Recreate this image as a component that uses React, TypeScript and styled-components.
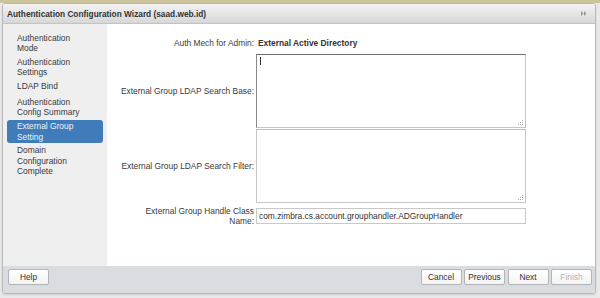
import styled, { createGlobalStyle } from "styled-components";

const GlobalStyle = createGlobalStyle`
  html, body {
    margin: 0;
    padding: 0;
  }
  body {
    width: 600px;
    height: 298px;
    overflow: hidden;
    background: linear-gradient(#cbc49c 0 3px, #e9e9e9 3px);
    font-family: "Liberation Sans", Arial, sans-serif;
    font-size: 8.4px;
    color: #333;
  }
`;

const Page = styled.div`
  padding: 3px 4px 4px 2px;
`;

const Dialog = styled.div`
  width: 592px;
  height: 289px;
  border: 1px solid #b9b9b9;
  border-radius: 3px;
  background: #fff;
  display: flex;
  flex-direction: column;
  overflow: hidden;
  box-shadow: 0 1px 2px rgba(0, 0, 0, 0.12);
`;

const TitleBar = styled.div`
  height: 19px;
  flex: none;
  display: flex;
  align-items: center;
  justify-content: space-between;
  padding: 0 8px 0 4px;
  background: linear-gradient(#f3f3f3, #d7d7d7);
  border-bottom: 1px solid #c3c3c3;
`;

const Title = styled.span`
  font-weight: bold;
  font-size: 8.3px;
  color: #333;
`;

const Body = styled.div`
  flex: 1;
  display: flex;
  min-height: 0;
`;

const Nav = styled.ul`
  width: 104px;
  flex: none;
  margin: 0;
  padding: 7.5px 0 0 4px;
  box-sizing: border-box;
  list-style: none;
  background: #efefef;
  display: flex;
  flex-direction: column;
  gap: 1px;
`;

const NavItem = styled.li<{ $active?: boolean }>`
  width: 96px;
  box-sizing: border-box;
  padding: 1px 4px 1px 10px;
  min-height: 15px;
  line-height: 10.6px;
  border-radius: 3px;
  color: ${(p) => (p.$active ? "#eef3f9" : "#3a3a3a")};
  background: ${(p) => (p.$active ? "#3f7cb9" : "transparent")};
`;

const Content = styled.div`
  flex: 1;
  padding: 13px 0 0 11px;
  display: flex;
  flex-direction: column;
`;

const Row = styled.div<{ $mt?: number }>`
  display: flex;
  align-items: center;
  gap: 2px;
  margin-top: ${(p) => p.$mt ?? 0}px;
`;

const Label = styled.div`
  width: 136px;
  flex: none;
  text-align: right;
  line-height: 10px;
  color: #3a3a3a;
`;

const Value = styled.div`
  padding-left: 2px;
  font-weight: bold;
  line-height: 12px;
  color: #333;
`;

const FieldWrap = styled.div`
  position: relative;
  width: 270px;
`;

const TextArea = styled.textarea<{ $focused?: boolean }>`
  display: block;
  width: 270px;
  height: 74px;
  box-sizing: border-box;
  margin: 0;
  padding: 2px;
  resize: none;
  outline: none;
  background: #fff;
  border: 1px solid #c6c6c6;
  border-top-color: ${(p) => (p.$focused ? "#6f6f6f" : "#bdbdbd")};
  border-left-color: ${(p) => (p.$focused ? "#8a8a8a" : "#c6c6c6")};
  font-family: "Liberation Sans", Arial, sans-serif;
  font-size: 8.4px;
`;

const Caret = styled.span`
  position: absolute;
  left: 4px;
  top: 3px;
  width: 1px;
  height: 8px;
  background: #333;
`;

const Grip = styled.svg`
  position: absolute;
  right: 3px;
  bottom: 3px;
`;

const TextInput = styled.input`
  display: block;
  width: 270px;
  height: 16px;
  box-sizing: border-box;
  margin: 0;
  padding: 0 2px;
  outline: none;
  border: 1px solid #c8c8c8;
  background: #fff;
  color: #333;
  font-family: "Liberation Sans", Arial, sans-serif;
  font-size: 8.4px;
`;

const Footer = styled.div`
  height: 27px;
  flex: none;
  box-sizing: border-box;
  padding: 3px 3px 0 5px;
  display: flex;
  align-items: flex-start;
  justify-content: space-between;
  background: #d9dde2;
`;

const ButtonGroup = styled.div`
  display: flex;
  gap: 2.5px;
`;

const Button = styled.button<{ $disabled?: boolean }>`
  width: 41px;
  height: 16px;
  padding: 0;
  border: 1px solid #b4b4b4;
  border-radius: 2px;
  background: linear-gradient(#ffffff, #f3f3f3);
  font-family: "Liberation Sans", Arial, sans-serif;
  font-size: 8.4px;
  color: ${(p) => (p.$disabled ? "#b3b3b3" : "#333")};
`;

const steps = [
  { label: ["Authentication", "Mode"] },
  { label: ["Authentication", "Settings"] },
  { label: ["LDAP Bind"] },
  { label: ["Authentication", "Config Summary"] },
  { label: ["External Group", "Setting"], active: true },
  { label: ["Domain", "Configuration", "Complete"] },
];

function ResizeGrip() {
  return (
    <Grip width="5" height="5" viewBox="0 0 5 5">
      <g fill="#a8a8a8">
        <rect x="4" y="0" width="1" height="1" />
        <rect x="2" y="2" width="1" height="1" />
        <rect x="4" y="2" width="1" height="1" />
        <rect x="0" y="4" width="1" height="1" />
        <rect x="2" y="4" width="1" height="1" />
        <rect x="4" y="4" width="1" height="1" />
      </g>
    </Grip>
  );
}

export default function App() {
  return (
    <>
      <GlobalStyle />
      <Page>
        <Dialog>
          <TitleBar>
            <Title>Authentication Configuration Wizard (saad.web.id)</Title>
            <svg width="6" height="5" viewBox="0 0 6 5">
              <path d="M0 0L2.5 2.5L0 5Z M3 0L5.5 2.5L3 5Z" fill="#9a9a9a" />
            </svg>
          </TitleBar>
          <Body>
            <Nav>
              {steps.map((s, i) => (
                <NavItem key={i} $active={s.active}>
                  {s.label.map((line, j) => (
                    <div key={j}>{line}</div>
                  ))}
                </NavItem>
              ))}
            </Nav>
            <Content>
              <Row>
                <Label>Auth Mech for Admin:</Label>
                <Value>External Active Directory</Value>
              </Row>
              <Row $mt={5}>
                <Label>External Group LDAP Search Base:</Label>
                <FieldWrap>
                  <TextArea $focused defaultValue="" />
                  <Caret />
                  <ResizeGrip />
                </FieldWrap>
              </Row>
              <Row $mt={1}>
                <Label>External Group LDAP Search Filter:</Label>
                <FieldWrap>
                  <TextArea defaultValue="" />
                  <ResizeGrip />
                </FieldWrap>
              </Row>
              <Row $mt={3}>
                <Label>
                  External Group Handle Class
                  <br />
                  Name:
                </Label>
                <FieldWrap>
                  <TextInput defaultValue="com.zimbra.cs.account.grouphandler.ADGroupHandler" />
                </FieldWrap>
              </Row>
            </Content>
          </Body>
          <Footer>
            <Button>Help</Button>
            <ButtonGroup>
              <Button>Cancel</Button>
              <Button>Previous</Button>
              <Button>Next</Button>
              <Button $disabled>Finish</Button>
            </ButtonGroup>
          </Footer>
        </Dialog>
      </Page>
    </>
  );
}
